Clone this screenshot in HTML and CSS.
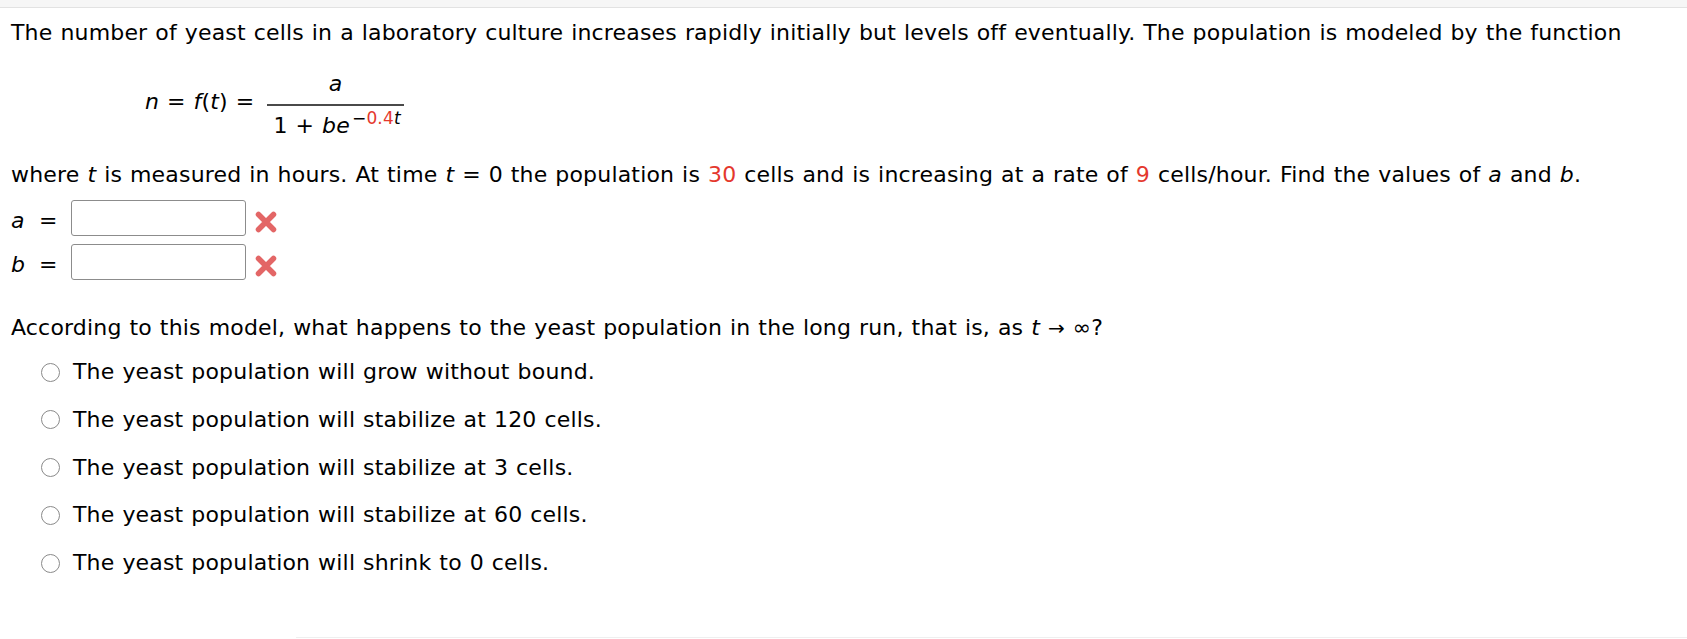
FILE: index.html
```html
<!DOCTYPE html>
<html lang="en">
<head>
<meta charset="utf-8">
<title>Yeast population</title>
<link rel="stylesheet" href="styles.css">
</head>
<body>
<div class="topbar"></div>
<main class="question">
  <p class="line intro">The number of yeast cells in a laboratory culture increases rapidly initially but levels off eventually. The population is modeled by the function</p>

  <div class="formula">
    <span class="lhs"><i>n</i> = <i>f</i>(<i>t</i>) =</span>
    <span class="frac">
      <span class="num"><i>a</i></span>
      <span class="den">1 + <i>be</i><span class="sup">−<span class="red">0.4</span><i>t</i></span></span>
    </span>
  </div>

  <p class="line where">where <i>t</i> is measured in hours. At time <i>t</i> = 0 the population is <span class="red">30</span> cells and is increasing at a rate of <span class="red">9</span> cells/hour. Find the values of <i>a</i> and <i>b</i>.</p>

  <div class="answers">
    <div class="arow">
      <span class="lbl"><i class="var">a</i><span class="eq">=</span></span>
      <span class="box"></span>
      <svg class="xmark" viewBox="0 0 24 24" aria-hidden="true"><path d="M4.5 4.5 L19.5 19.5 M19.5 4.5 L4.5 19.5"/></svg>
    </div>
    <div class="arow">
      <span class="lbl"><i class="var">b</i><span class="eq">=</span></span>
      <span class="box"></span>
      <svg class="xmark" viewBox="0 0 24 24" aria-hidden="true"><path d="M4.5 4.5 L19.5 19.5 M19.5 4.5 L4.5 19.5"/></svg>
    </div>
  </div>

  <p class="line according">According to this model, what happens to the yeast population in the long run, that is, as <i>t</i> <span class="arrow">→</span> <span class="inf">∞</span>?</p>

  <ul class="options">
    <li class="opt"><span class="radio"></span><span>The yeast population will grow without bound.</span></li>
    <li class="opt"><span class="radio"></span><span>The yeast population will stabilize at 120 cells.</span></li>
    <li class="opt"><span class="radio"></span><span>The yeast population will stabilize at 3 cells.</span></li>
    <li class="opt"><span class="radio"></span><span>The yeast population will stabilize at 60 cells.</span></li>
    <li class="opt"><span class="radio"></span><span>The yeast population will shrink to 0 cells.</span></li>
  </ul>

  <div class="rule"></div>
</main>
</body>
</html>
```

FILE: styles.css
```css
html, body {
  margin: 0;
  padding: 0;
  background: #ffffff;
}
body {
  font-family: "DejaVu Sans", Verdana, sans-serif;
  font-size: 22px;
  letter-spacing: 0.18px;
  word-spacing: 0.75px;
  color: #000;
  overflow: hidden;
}
i { font-style: italic; }
.red { color: #e4382d; }

.topbar {
  height: 7px;
  background: #f6f6f6;
  border-bottom: 1px solid #e2e2e2;
}
.question {
  padding-left: 11px;
}
.line {
  margin: 0;
  line-height: 26px;
  white-space: nowrap;
}
.intro { margin-top: 12px; }

.formula {
  display: flex;
  align-items: flex-start;
  margin-top: 25px;
  margin-left: 134px;
  line-height: 26px;
}
.lhs {
  margin-top: 18px;
  white-space: pre;
}
.frac {
  display: inline-flex;
  flex-direction: column;
  align-items: stretch;
  margin-left: 13px;
}
.num {
  text-align: center;
  padding-bottom: 7px;
  border-bottom: 2px solid #4a4a4a;
}
.den {
  padding: 7px 3px 0 6px;
  white-space: nowrap;
}
.sup {
  font-size: 17px;
  line-height: 0;
  vertical-align: 9px;
  margin-left: 2px;
}

.where { margin-top: 23px; }

.answers {
  display: flex;
  flex-direction: column;
  gap: 8px;
  margin-top: 12px;
}
.arow {
  display: flex;
  align-items: flex-start;
  height: 36px;
}
.lbl {
  display: flex;
  width: 60px;
  margin-top: 8px;
  line-height: 26px;
}
.var {
  width: 28px;
}
.box {
  box-sizing: border-box;
  width: 175px;
  height: 36px;
  border: 1px solid #8c8c8c;
  border-radius: 3px;
  background: #fff;
}
.xmark {
  width: 24px;
  height: 24px;
  margin-left: 8px;
  margin-top: 10px;
}
.xmark path {
  fill: none;
  stroke: #e36666;
  stroke-width: 5.5;
  stroke-linecap: round;
}

.according { margin-top: 35px; }
.arrow { font-size: 20px; }
.inf { font-size: 22px; }

.options {
  list-style: none;
  margin: 18px 0 0;
  padding: 0 0 0 30px;
  display: flex;
  flex-direction: column;
  gap: 21.75px;
}
.opt {
  display: flex;
  align-items: center;
  line-height: 26px;
  white-space: nowrap;
}
.radio {
  box-sizing: border-box;
  width: 19px;
  height: 19px;
  border: 1.5px solid #8a8a8a;
  border-radius: 50%;
  background: #fff;
  margin-right: 13px;
  flex: none;
}

.rule {
  margin-top: 61px;
  margin-left: 285px;
  border-top: 1px solid #efefef;
}
```
